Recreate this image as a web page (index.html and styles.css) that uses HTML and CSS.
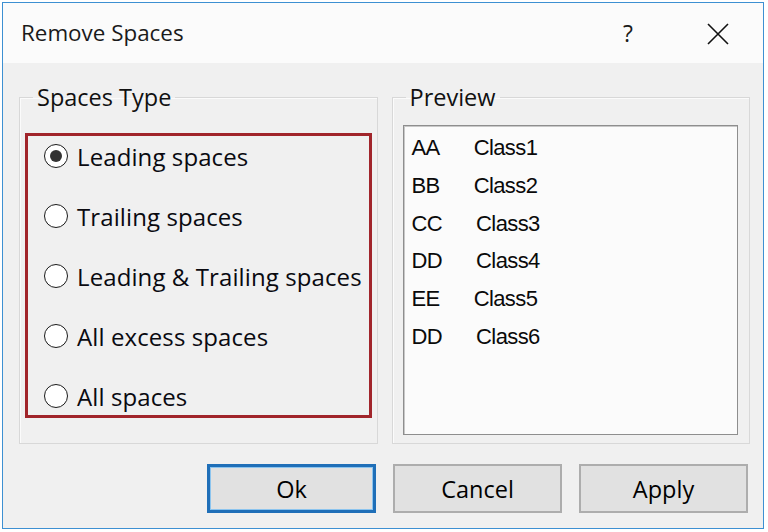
FILE: index.html
```html
<!DOCTYPE html>
<html>
<head>
<meta charset="utf-8">
<link rel="stylesheet" href="styles.css">
</head>
<body>
<div class="window">
  <div class="titlebar">
    <div class="title">Remove Spaces</div>
    <div class="tb-btn help">?</div>
    <div class="tb-btn close">
      <svg width="22" height="22" viewBox="0 0 22 22"><path d="M1 1 L21 21 M21 1 L1 21" stroke="#111" stroke-width="1.6" fill="none"/></svg>
    </div>
  </div>
  <div class="content">
    <div class="groups">
      <fieldset class="group">
        <legend>Spaces Type</legend>
        <div class="highlight">
          <div class="radio-item"><span class="radio checked"></span><span>Leading spaces</span></div>
          <div class="radio-item"><span class="radio"></span><span>Trailing spaces</span></div>
          <div class="radio-item"><span class="radio"></span><span>Leading &amp; Trailing spaces</span></div>
          <div class="radio-item"><span class="radio"></span><span>All excess spaces</span></div>
          <div class="radio-item"><span class="radio"></span><span>All spaces</span></div>
        </div>
      </fieldset>
      <fieldset class="group preview">
        <legend>Preview</legend>
        <div class="listbox">
          <div class="row"><span class="key">AA</span><span>Class1</span></div>
          <div class="row"><span class="key">BB</span><span>Class2</span></div>
          <div class="row"><span class="key">CC</span><span>Class3</span></div>
          <div class="row"><span class="key">DD</span><span>Class4</span></div>
          <div class="row"><span class="key">EE</span><span>Class5</span></div>
          <div class="row"><span class="key">DD</span><span>Class6</span></div>
        </div>
      </fieldset>
    </div>
    <div class="buttons">
      <div class="btn default">Ok</div>
      <div class="btn">Cancel</div>
      <div class="btn">Apply</div>
    </div>
  </div>
</div>
</body>
</html>
```
FILE: styles.css
```css
html, body {
  margin: 0;
  padding: 0;
  background: #ffffff;
}
body {
  font-family: "Open Sans", "Noto Sans", sans-serif;
  color: #000;
}
.window {
  margin: 2px 0 0 2px;
  width: 760px;
  height: 525px;
  border: 1px solid #3d90d2;
  background: #f0f0f0;
  display: flex;
  flex-direction: column;
}
.titlebar {
  height: 60px;
  flex: none;
  background: #fbfbfb;
  display: flex;
  align-items: center;
}
.title {
  flex: 1;
  padding-left: 18px;
  font-size: 22.4px;
  color: #1a1a1a;
  line-height: 30px;
}
.tb-btn {
  width: 90px;
  height: 60px;
  display: flex;
  align-items: center;
  justify-content: center;
}
.help {
  font-size: 23px;
  color: #1a1a1a;
  font-weight: 400;
  padding-left: 1px;
}
.close svg {
  display: block;
  margin-top: 2px;
}
.content {
  flex: 1;
  display: flex;
  flex-direction: column;
  padding: 20px 0 14px 0;
  gap: 20px;
}
.groups {
  height: 361px;
  display: flex;
  gap: 14px;
  padding: 0 13px 0 16px;
}
.group {
  flex: 1;
  margin: 0;
  padding: 0;
  min-width: 0;
  border: 1px solid #d8d8d8;
  box-shadow: inset 1px 1px 0 #fbfbfb;
  display: flex;
  flex-direction: column;
}
.group legend {
  font-size: 23.5px;
  line-height: 28px;
  margin-left: 13px;
  padding: 0 4px;
  color: #111;
}
.highlight {
  margin: 22px 5px 0 5px;
  height: 274px;
  border: 3px solid #a1252b;
  padding: 5px 0 0 16px;
  display: flex;
  flex-direction: column;
  gap: 30px;
}
.radio-item {
  height: 30px;
  display: flex;
  align-items: center;
  gap: 9px;
  font-size: 24px;
  letter-spacing: 0.1px;
  color: #0a0a10;
}
.radio {
  width: 22px;
  height: 22px;
  border: 1.6px solid #1a1a1a;
  border-radius: 50%;
  background: #fff;
  flex: none;
  display: flex;
  align-items: center;
  justify-content: center;
}
.radio.checked::after {
  content: "";
  width: 12px;
  height: 12px;
  border-radius: 50%;
  background: #333;
}
.preview .listbox {
  margin: 14px 11px 8px 10px;
  flex: 1;
  background: #fbfbfb;
  border: 1px solid #8e8e8e;
  box-shadow: inset 1px 1px 0 #c8c8c8;
  padding: 3px 0 0 8px;
  font-family: "Liberation Sans", Arial, sans-serif;
  font-size: 22px;
  letter-spacing: -0.6px;
  color: #0a0a0a;
}
.row {
  height: 37.8px;
  line-height: 37.8px;
  display: flex;
}
.key {
  margin-right: 34px;
}
.buttons {
  display: flex;
  justify-content: flex-end;
  gap: 17px;
  padding-right: 15px;
}
.btn {
  width: 165px;
  height: 45px;
  border: 2px solid #adadad;
  background: #e1e1e1;
  display: flex;
  align-items: center;
  justify-content: center;
  font-size: 23.5px;
  color: #000;
}
.btn.default {
  border: 3px solid #1f6fb8;
  width: 163px;
  height: 43px;
  box-shadow: inset 0 0 0 1px #8cc4ee;
}
```
